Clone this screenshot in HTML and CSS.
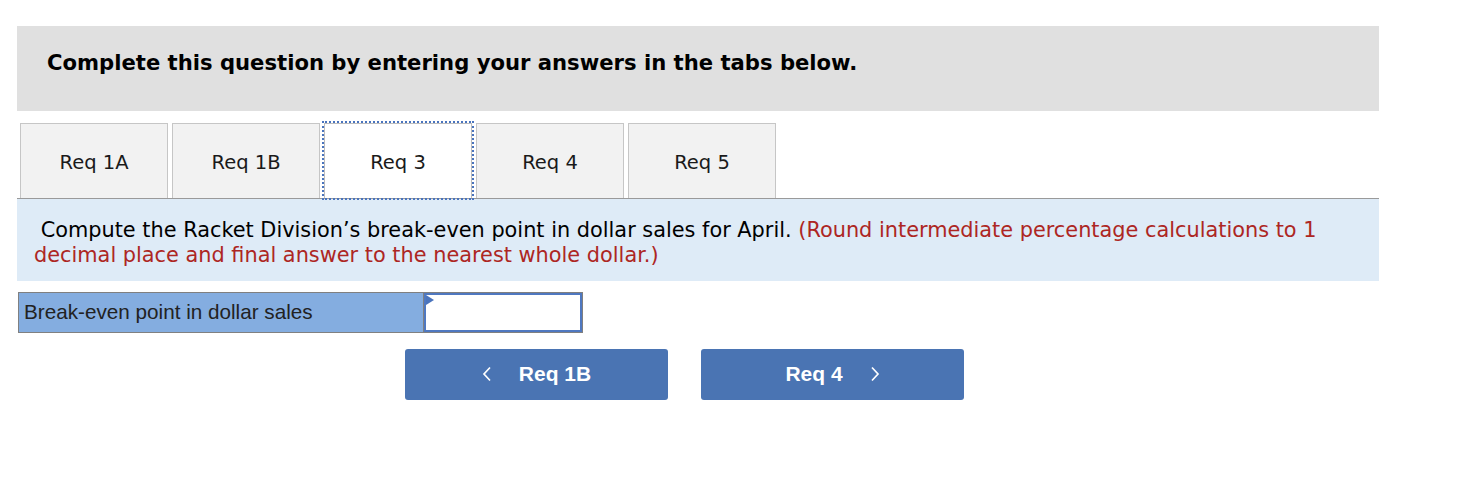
FILE: index.html
```html
<!DOCTYPE html>
<html>
<head>
<meta charset="utf-8">
<link rel="stylesheet" href="styles.css">
</head>
<body>
<div class="wrap">
  <div class="header">Complete this question by entering your answers in the tabs below.</div>
  <div class="tabs">
    <div class="tab">Req 1A</div>
    <div class="tab">Req 1B</div>
    <div class="tab active">Req 3</div>
    <div class="tab">Req 4</div>
    <div class="tab">Req 5</div>
  </div>
  <div class="prompt">&nbsp;Compute the Racket Division’s break-even point in dollar sales for April. <span class="note">(Round intermediate percentage calculations to 1 decimal place and final answer to the nearest whole dollar.)</span></div>
  <div class="answer">
    <div class="label">Break-even point in dollar sales</div>
    <div class="input"><span class="marker"></span></div>
  </div>
  <div class="nav">
    <button class="btn"><svg class="chev" width="10" height="16" viewBox="0 0 10 16"><path d="M8 1.5 L2 8 L8 14.5" fill="none" stroke="#fff" stroke-width="1.7"/></svg><span>Req 1B</span></button>
    <button class="btn"><span>Req 4</span><svg class="chev" width="10" height="16" viewBox="0 0 10 16"><path d="M2 1.5 L8 8 L2 14.5" fill="none" stroke="#fff" stroke-width="1.7"/></svg></button>
  </div>
</div>
</body>
</html>
```
FILE: styles.css
```css
html, body {
  margin: 0;
  padding: 0;
  background: #fff;
}
body {
  font-family: "DejaVu Sans", Verdana, sans-serif;
  color: #111;
}
.wrap {
  width: 1362px;
  margin-left: 17px;
  padding-top: 26px;
}
.header {
  height: 85px;
  box-sizing: border-box;
  background: #e0e0e0;
  padding: 24px 0 0 30px;
  font-weight: bold;
  font-size: 21.15px;
  line-height: 26px;
  color: #000;
}
.tabs {
  display: flex;
  gap: 4px;
  margin-top: 12px;
  padding-left: 3px;
  height: 75px;
  border-bottom: 1px solid #9a9a9a;
  box-sizing: content-box;
}
.tab {
  width: 148px;
  height: 75px;
  box-sizing: border-box;
  border: 1px solid #c6c6c6;
  border-bottom: none;
  background: #f2f2f2;
  display: flex;
  align-items: center;
  justify-content: center;
  padding-top: 2px;
  font-size: 19.5px;
  color: #1a1a1a;
}
.tab.active {
  background: #fff;
  border-color: #bdbdbd;
  outline: 2px dotted #4a74bd;
  outline-offset: 0;
  position: relative;
  z-index: 1;
}
.prompt {
  background: #deebf7;
  padding: 19px 17px 13px 17px;
  font-size: 20.85px;
  line-height: 25px;
  color: #000;
}
.note {
  color: #ad2623;
}
.answer {
  display: flex;
  margin-top: 11px;
  margin-left: 1px;
  width: 565px;
  height: 41px;
  box-sizing: border-box;
  border: 1px solid #808080;
}
.label {
  width: 405px;
  background: #84ade0;
  font-family: "Liberation Sans", Arial, sans-serif;
  font-size: 20.7px;
  color: #222;
  padding-left: 5px;
  padding-bottom: 2px;
  box-sizing: border-box;
  display: flex;
  align-items: center;
  border-right: 1px solid #808080;
}
.input {
  flex: 1;
  background: #fff;
  border: 2px solid #4f78c0;
  position: relative;
}
.marker {
  position: absolute;
  left: 0;
  top: 0;
  width: 0;
  height: 0;
  border-top: 5px solid transparent;
  border-bottom: 5px solid transparent;
  border-left: 8px solid #4a74bd;
}
.nav {
  display: flex;
  gap: 33px;
  margin-top: 16px;
  margin-left: 388px;
}
.btn {
  width: 263px;
  height: 51px;
  border: none;
  border-radius: 3px;
  background: #4a74b3;
  color: #fff;
  font-family: "Liberation Sans", Arial, sans-serif;
  font-weight: bold;
  font-size: 21px;
  display: flex;
  align-items: center;
  justify-content: center;
  gap: 27px;
  padding: 0 0 2px 0;
}
.chev {
  display: block;
}
```
